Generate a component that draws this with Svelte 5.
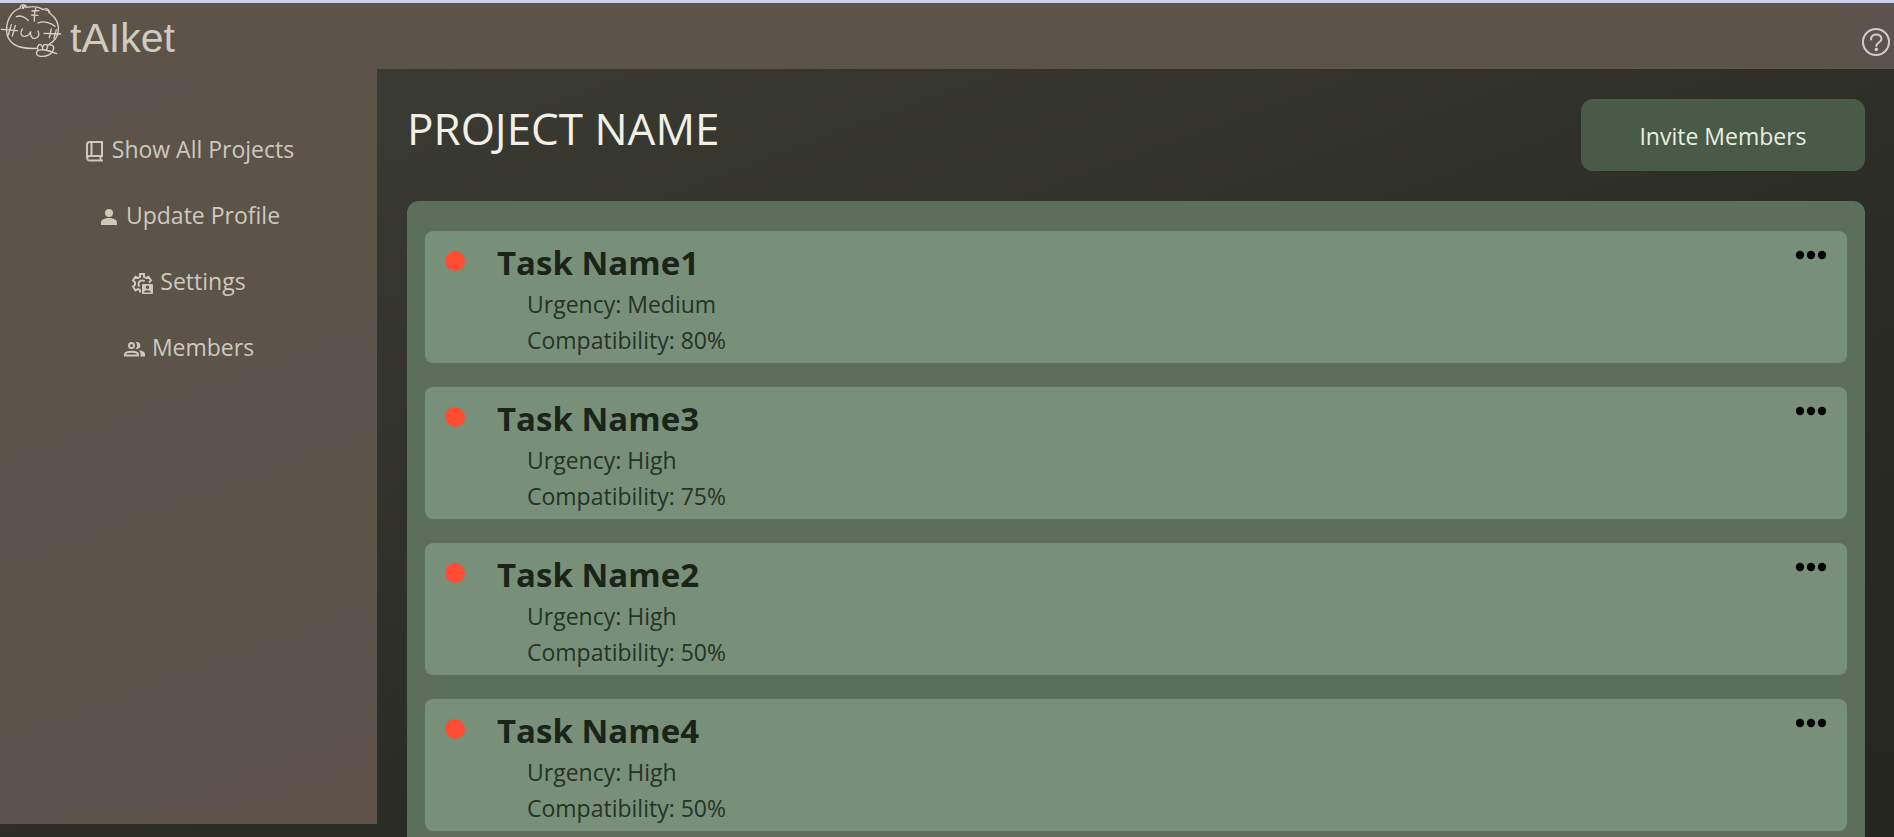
<script lang="ts">
  type Task = { name: string; urgency: string; compatibility: number };

  const links = [
    { label: 'Show All Projects', icon: 'book' },
    { label: 'Update Profile', icon: 'person' },
    { label: 'Settings', icon: 'settings' },
    { label: 'Members', icon: 'group' },
  ];

  let tasks: Task[] = [
    { name: 'Task Name1', urgency: 'Medium', compatibility: 80 },
    { name: 'Task Name3', urgency: 'High', compatibility: 75 },
    { name: 'Task Name2', urgency: 'High', compatibility: 50 },
    { name: 'Task Name4', urgency: 'High', compatibility: 50 },
  ];
</script>

<div class="page">
  <header class="topbar">
    <a class="brand" href="#home">
      <svg class="cat" viewBox="0 9 192 177" aria-hidden="true">
        <path d="M20 84C21 58 36 32 60 25C60 14 72 9 82 22C98 18 118 21 130 29C138 22 149 27 150 40C166 52 177 70 175 92C173 112 163 124 148 132" />
        <path d="M20 84C17 112 34 134 60 141C80 146 98 146 113 145" />
        <path d="M66 25C68 15 75 16 78 23M70 25L73 19M138 31C143 28 146 32 147 38" />
        <path d="M49 50C61 45 76 50 85 62M114 69C130 62 152 67 165 79" />
        <path d="M107 25C103 38 103 50 103 63M96 33L117 32M95 45L114 46" />
        <path d="M4 88L52 92M34 74L25 105M46 76L37 108" />
        <path d="M132 100L182 102M154 87L148 113M169 89L162 115" />
        <path d="M67 87C59 98 63 110 74 109C84 108 90 101 92 94C90 106 95 116 104 116C115 115 120 104 114 93" />
        <path d="M113 150C110 137 118 130 124 135C128 139 129 145 128 149C126 136 135 130 141 135C144 138 143 143 140 148M143 135C155 132 164 138 160 149C157 162 140 171 122 169C108 168 107 158 112 153C124 144 145 151 170 161" />
      </svg>
      <span class="wordmark">tAIket</span>
    </a>
    <button class="help" aria-label="Help">
      <svg viewBox="0 0 30 30" aria-hidden="true">
        <circle cx="15" cy="15" r="13" />
        <path d="M10 12.500C10 5.500 20.500 6 20.500 12C20.500 15.500 15.300 15.500 15.300 19" />
        <circle class="solid" cx="15.300" cy="22.500" r="1.800" />
      </svg>
    </button>
  </header>

  <div class="body">
    <nav class="sidebar">
      {#each links as link}
        <a class="navLink" href="#{link.icon}">
          <svg class="navIcon" viewBox="0 0 22 22" aria-hidden="true">
            {#if link.icon === 'book'}
              <path class="line" d="M19 16H6.500A2.250 2.250 0 0 0 6.500 20.500H20M19 2H6.500A2.500 2.500 0 0 0 4 4.500V18M19 1V17M8.500 2V16M17.500 16V20.500" />
            {:else if link.icon === 'person'}
              <circle cx="12" cy="7" r="4" />
              <path d="M4 19V16.500C4 13.500 8 12 12 12S20 13.500 20 16.500V19Z" />
            {:else if link.icon === 'settings'}
              <path class="line" d="M9 20.500V18L7 17L4.500 18.500L2 14.500L4 12.800V10.500L2 8.500L4.500 4.800L7 6L9 5V2H13V5L15 6L17.500 4.800L20 8.500L18 10.500" />
              <path class="line" d="M8.500 14.500A3.500 3.500 0 0 1 13.500 9.500" />
              <path fill-rule="evenodd" d="M12 12H21A1 1 0 0 1 22 13V21A1 1 0 0 1 21 22H12A1 1 0 0 1 11 21V13A1 1 0 0 1 12 12ZM16.500 13.500A1.700 1.700 0 1 0 16.500 16.900A1.700 1.700 0 1 0 16.500 13.500ZM13 20.500H20C20 17.500 13 17.500 13 20.500Z" />
            {:else}
              <circle class="line" cx="8.500" cy="7.500" r="2.500" />
              <path class="line" d="M2 17.500V16.500C2 12.800 15 12.800 15 16.500V17.500Z" />
              <path d="M12.500 11C14.500 9.500 14.500 5.500 12.500 4C19 3 19 12 12.500 11ZM16 12.300C19 12.700 22 14 22 16V18.500H17.500V16C17.500 14.500 17 13.500 16 12.300Z" />
            {/if}
          </svg>
          {link.label}
        </a>
      {/each}
    </nav>

    <main class="content">
      <div class="heading">
        <h1>PROJECT NAME</h1>
        <button class="invite">Invite Members</button>
      </div>

      <section class="board">
        {#each tasks as task}
          <article class="task">
            <span class="status"></span>
            <div class="details">
              <h2>{task.name}</h2>
              <p>Urgency: {task.urgency}</p>
              <p>Compatibility: {task.compatibility}%</p>
            </div>
            <button class="more" aria-label="More options for {task.name}">
              <svg viewBox="0 0 32 10" aria-hidden="true">
                <circle cx="5" cy="5" r="4.200" />
                <circle cx="16" cy="5" r="4.200" />
                <circle cx="27" cy="5" r="4.200" />
              </svg>
            </button>
          </article>
        {/each}
      </section>
    </main>
  </div>
</div>

<style>
  :global(body) {
    margin: 0;
  }
  .page {
    height: 100vh;
    overflow: hidden;
    box-sizing: border-box;
    border-top: 3px solid #c9d0e7;
    background: linear-gradient(160deg, #3e3f37 0%, #2c2c26 60%, #262621 100%);
    font-family: 'Segoe UI', 'Open Sans', 'Noto Sans', sans-serif;
  }
  button {
    border: none;
    padding: 0;
    background: none;
    font-family: inherit;
    cursor: pointer;
  }
  .topbar {
    display: flex;
    justify-content: space-between;
    height: 66px;
    background: linear-gradient(90deg, #5c5349, #5c534c);
  }
  .brand {
    display: flex;
    align-items: flex-start;
    gap: 6px;
    color: #cfcbc0;
    text-decoration: none;
  }
  .cat {
    width: 64px;
    height: 59px;
    fill: none;
    stroke: #d8d2c1;
    stroke-width: 4;
    stroke-linecap: round;
  }
  .wordmark {
    font-family: 'Liberation Sans', sans-serif;
    font-size: 41px;
    line-height: 70px;
  }
  .help {
    align-self: center;
    width: 30px;
    height: 30px;
    margin: 12px 3px 0 0;
  }
  .help svg {
    display: block;
    fill: none;
    stroke: #d3cec5;
    stroke-width: 2;
    stroke-linecap: round;
  }
  .help .solid {
    fill: #d3cec5;
    stroke: none;
  }
  .body {
    display: flex;
    align-items: flex-start;
  }
  .sidebar {
    display: flex;
    flex: 0 0 377px;
    flex-direction: column;
    align-items: center;
    gap: 30px;
    box-sizing: border-box;
    min-height: calc(100vh - 82px);
    padding-top: 62px;
    background: linear-gradient(160deg, #5c534e 0%, #5c5349 25%, #5c5349 35%, #5c534e 50%, #5c5349 65%, #5c534e 82%, #5c5249 100%);
  }
  .navLink {
    display: flex;
    align-items: center;
    gap: 7px;
    color: #cdc9bf;
    font-size: 23px;
    line-height: 36px;
    text-decoration: none;
  }
  .navIcon {
    width: 22px;
    height: 22px;
    margin-top: 4px;
    fill: #cdc9b9;
  }
  .navIcon .line {
    fill: none;
    stroke: #cdc9b9;
    stroke-width: 2;
  }
  .content {
    flex: 1;
    min-width: 0;
    padding: 30px 29px 0 30px;
  }
  .heading {
    display: flex;
    justify-content: space-between;
    align-items: flex-start;
    margin-bottom: 30px;
  }
  h1 {
    margin: 0;
    color: #f1f0e8;
    font-size: 44px;
    font-weight: 400;
    line-height: 58px;
  }
  .invite {
    width: 284px;
    height: 72px;
    padding-top: 2px;
    border-radius: 12px;
    background: #495b48;
    color: #eaeee0;
    font-size: 23px;
  }
  .board {
    display: flex;
    flex-direction: column;
    gap: 24px;
    padding: 30px 18px;
    border-radius: 12px;
    background: #5c6f5c;
  }
  .task {
    display: flex;
    align-items: flex-start;
    height: 132px;
    border-radius: 8px;
    background: #789079;
  }
  .status {
    width: 20px;
    height: 20px;
    margin: 20px 32px 0 20px;
    border-radius: 50%;
    background: #ff4c33;
  }
  .details {
    flex: 1;
    color: #1a2419;
  }
  h2 {
    margin: 8px 0 0;
    font-size: 33px;
    font-weight: 700;
    line-height: 47px;
  }
  p {
    margin: 0 0 0 30px;
    color: #263326;
    font-size: 23px;
    line-height: 36px;
  }
  .more {
    margin: 19px 20px 0 0;
  }
  .more svg {
    display: block;
    width: 32px;
    height: 10px;
    fill: #000;
  }
</style>
